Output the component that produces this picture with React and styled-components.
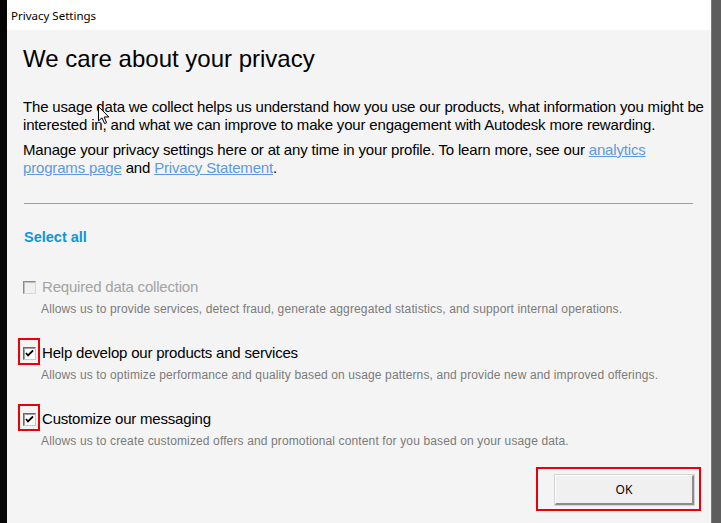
import React from "react";
import styled, { createGlobalStyle } from "styled-components";

const GlobalStyle = createGlobalStyle`
    html, body {
        margin: 0;
        padding: 0;
        background: #000000;
    }
    * {
        box-sizing: border-box;
    }
`;

const options = [
    {
        id: "required",
        label: "Required data collection",
        hint: "Allows us to provide services, detect fraud, generate aggregated statistics, and support internal operations.",
        checked: false,
        disabled: true,
    },
    {
        id: "develop",
        label: "Help develop our products and services",
        hint: "Allows us to optimize performance and quality based on usage patterns, and provide new and improved offerings.",
        checked: true,
        marked: true,
    },
    {
        id: "messaging",
        label: "Customize our messaging",
        hint: "Allows us to create customized offers and promotional content for you based on your usage data.",
        checked: true,
        marked: true,
    },
];

const Checkbox = ({ checked, disabled }) => (
    <Box $disabled={disabled}>
        {checked && (
            <svg width="9" height="9" viewBox="0 0 9 9">
                <path d="M1 4 L3 6.5 L8 1.5" stroke="#000" strokeWidth="1.8" fill="none" />
            </svg>
        )}
    </Box>
);

export default function App() {
    return (
        <>
            <GlobalStyle />
            <Screen>
                <LeftEdge />
                <Dialog>
                    <TitleBar>Privacy Settings</TitleBar>
                    <Content>
                        <Heading>We care about your privacy</Heading>
                        <Paragraph>
                            The usage data we collect helps us understand how you use our products, what information you might be interested in, and what we can improve to make your engagement with Autodesk more rewarding.
                        </Paragraph>
                        <Paragraph $gap={7}>
                            Manage your privacy settings here or at any time in your profile. To learn more, see our <Link>analytics </Link><Link>programs page</Link> and <Link>Privacy Statement</Link>.
                        </Paragraph>
                        <Divider />
                        <SelectAll>Select all</SelectAll>
                        <OptionList>
                            {options.map(o => (
                                <Option key={o.id}>
                                    <OptionRow>
                                        <CheckWrap>
                                            <Checkbox checked={o.checked} disabled={o.disabled} />
                                            {o.marked && <Marker />}
                                        </CheckWrap>
                                        <OptionLabel $disabled={o.disabled}>{o.label}</OptionLabel>
                                    </OptionRow>
                                    <OptionHint>{o.hint}</OptionHint>
                                </Option>
                            ))}
                        </OptionList>
                        <Footer>
                            <ButtonWrap>
                                <OkButton>OK</OkButton>
                                <ButtonMarker />
                            </ButtonWrap>
                        </Footer>
                        <Cursor width="12" height="19" viewBox="0 0 12 19">
                            <path d="M0.5 0.5 L0.5 15 L4 11.8 L6.6 17.6 L8.6 16.7 L6.1 11 L10.8 11 Z" fill="#fff" stroke="#000" strokeWidth="1" />
                        </Cursor>
                    </Content>
                </Dialog>
                <RightEdge />
            </Screen>
        </>
    );
}

const Screen = styled.div`
    width: 721px;
    height: 523px;
    display: flex;
    overflow: hidden;
    font-family: "Liberation Sans", Arial, sans-serif;
`;

const LeftEdge = styled.div`
    width: 7px;
    background-color: #050505;
    flex-shrink: 0;
`;

const RightEdge = styled.div`
    width: 10px;
    background-color: #5d5d5d;
    border-left: 1px solid #7a7a7a;
    flex-shrink: 0;
`;

const Dialog = styled.div`
    flex: 1;
    display: flex;
    flex-direction: column;
    background-color: #f4f4f4;
`;

const TitleBar = styled.div`
    height: 30px;
    background-color: #ffffff;
    padding-left: 4px;
    padding-top: 8px;
    font-family: "Noto Sans", "Liberation Sans", sans-serif;
    font-size: 11.5px;
    color: #000000;
`;

const Content = styled.div`
    position: relative;
    flex: 1;
    padding: 15px 0 0 16px;
`;

const Heading = styled.h1`
    margin: 0;
    font-size: 24px;
    line-height: 28px;
    font-weight: 400;
    color: #000000;
`;

const Paragraph = styled.p`
    margin: ${props => props.$gap || 25}px 0 0 0;
    padding-right: 2px;
    font-size: 15px;
    letter-spacing: -0.17px;
    line-height: 18px;
    color: #000000;
`;

const Link = styled.span`
    color: #5b9bdc;
    text-decoration: underline;
`;

const Divider = styled.div`
    height: 1px;
    background-color: #a0a0a0;
    margin: 26px 18px 0 1px;
`;

const SelectAll = styled.div`
    margin-top: 24px;
    margin-left: 1px;
    font-size: 14.5px;
    line-height: 18px;
    font-weight: 700;
    color: #0d96d8;
`;

const OptionList = styled.div`
    margin-top: 32px;
    display: flex;
    flex-direction: column;
    gap: 27px;
`;

const Option = styled.div`
    display: flex;
    flex-direction: column;
    gap: 6px;
`;

const OptionRow = styled.div`
    display: flex;
    align-items: center;
    gap: 6px;
    height: 18px;
`;

const CheckWrap = styled.div`
    position: relative;
    width: 13px;
    height: 13px;
`;

const Box = styled.div`
    width: 13px;
    height: 13px;
    display: flex;
    align-items: center;
    justify-content: center;
    background-color: ${props => props.$disabled ? "#f0f0f0" : "#ffffff"};
    border-top: 1px solid ${props => props.$disabled ? "#8a8a8a" : "#6a6a6a"};
    border-left: 1px solid ${props => props.$disabled ? "#8a8a8a" : "#6a6a6a"};
    border-right: 1px solid ${props => props.$disabled ? "#d8d8d8" : "#c8c8c8"};
    border-bottom: 1px solid ${props => props.$disabled ? "#d8d8d8" : "#c8c8c8"};
    box-shadow: inset 1px 1px 0 ${props => props.$disabled ? "#c0c0c0" : "#a0a0a0"};
`;

const Marker = styled.div`
    position: absolute;
    left: -5px;
    top: -9px;
    width: 22px;
    height: 27px;
    border: 2px solid #e8000b;
`;

const OptionLabel = styled.span`
    font-size: 15px;
    letter-spacing: -0.2px;
    line-height: 18px;
    color: ${props => props.$disabled ? "#a3a3a3" : "#000000"};
`;

const OptionHint = styled.div`
    padding-left: 18px;
    font-size: 12px;
    letter-spacing: 0.13px;
    line-height: 15px;
    color: #7b7b7b;
`;

const Footer = styled.div`
    margin-top: 26px;
    display: flex;
    justify-content: flex-end;
    padding-right: 17px;
`;

const ButtonWrap = styled.div`
    position: relative;
`;

const OkButton = styled.button`
    width: 139px;
    height: 30px;
    background-color: #f0f0f0;
    border-top: 1px solid #ffffff;
    border-left: 1px solid #ffffff;
    border-right: 2px solid #8c8c8c;
    border-bottom: 2px solid #8c8c8c;
    box-shadow: 0 0 0 1px #d4d4d4;
    font-family: "Noto Sans", "Liberation Sans", sans-serif;
    font-size: 12px;
    color: #000000;
    padding: 0;
`;

const ButtonMarker = styled.div`
    position: absolute;
    left: -19px;
    top: -8px;
    width: 165px;
    height: 44px;
    border: 2px solid #e8000b;
`;

const Cursor = styled.svg`
    position: absolute;
    left: 91px;
    top: 76px;
`;
